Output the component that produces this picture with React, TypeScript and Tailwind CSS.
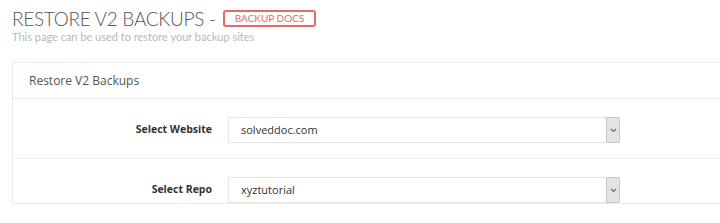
import React from 'react';

const Field: React.FC<{ label: string; value: string }> = ({ label, value }) => (
  <div className="flex items-center h-[26px]">
    <label className="w-[215px] pr-4 text-right text-[10.5px] font-bold text-[#333] [font-family:'Open_Sans',sans-serif]">
      {label}
    </label>
    <div className="flex h-[26px] w-[392px]">
      <div className="flex flex-1 items-center border border-[#e5e5e5] border-r-0 bg-white pl-[12px] text-[11px] text-[#333] [font-family:'Open_Sans',sans-serif]">
        {value}
      </div>
      <div className="flex w-[14px] items-center justify-center border border-[#c8c8c8] bg-[#e3e3e3] rounded-r-[2px]">
        <svg width="7" height="5" viewBox="0 0 7 5" fill="none">
          <path d="M1 1l2.5 2.5L6 1" stroke="#666" strokeWidth="1.1" />
        </svg>
      </div>
    </div>
  </div>
);

const App: React.FC = () => {
  return (
    <div className="h-[223px] w-[720px] overflow-hidden bg-white">
      <div className="pl-3 pt-[7px]">
        <div className="flex items-center gap-[7px]">
          <h1 className="text-[19px] leading-[23px] font-light tracking-[-0.3px] text-[#555] [font-family:'Lato',sans-serif]">
            RESTORE V2 BACKUPS -
          </h1>
          <span className="flex h-[17px] items-center rounded-[3px] border-2 border-[#e26a6a] px-[10px] text-[10px] text-[#e26a6a] [font-family:'Lato',sans-serif]">
            BACKUP DOCS
          </span>
        </div>
        <p className="text-[11px] leading-[13px] text-[#b8b8b8] [font-family:'Lato',sans-serif]">
          This page can be used to restore your backup sites
        </p>
      </div>

      <div className="ml-3 mt-[19px] border border-r-0 border-[#e7ecf1] bg-white">
        <div className="flex h-[36px] items-center border-b border-dotted border-[#d8dde2] pl-[16px] text-[12px] text-[#555] [font-family:'Open_Sans',sans-serif]">
          Restore V2 Backups
        </div>
        <div className="pt-[18px] pb-[15px] border-b border-dotted border-[#e0e4e8]">
          <Field label="Select Website" value="solveddoc.com" />
        </div>
        <div className="pt-[18px]">
          <Field label="Select Repo" value="xyztutorial" />
        </div>
      </div>
    </div>
  );
};

export default App;
